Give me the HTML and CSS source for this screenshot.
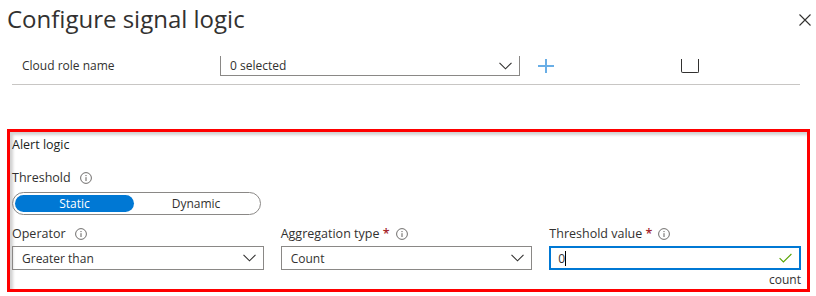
FILE: index.html
```html
<!DOCTYPE html>
<html>
<head>
<meta charset="utf-8">
<link rel="stylesheet" href="styles.css">
</head>
<body>
<div class="panel">
  <header class="header">
    <h1 class="title">Configure signal logic</h1>
    <button class="close" aria-label="Close">
      <svg width="12" height="12" viewBox="0 0 12 12"><path d="M0.5 0.5L11.5 11.5M11.5 0.5L0.5 11.5" stroke="#323130" stroke-width="1.1" fill="none"/></svg>
    </button>
  </header>

  <div class="dim-row">
    <div class="dim-label">Cloud role name</div>
    <div class="dim-select">
      <span>0 selected</span>
      <svg class="chev" width="13" height="8" viewBox="0 0 13 8"><path d="M0.5 0.8L6.5 6.8L12.5 0.8" stroke="#323130" stroke-width="1.1" fill="none"/></svg>
    </div>
    <div class="dim-add">
      <svg width="16" height="14" viewBox="0 0 16 14"><path d="M8 0V14M0 7H16" stroke="#69aee6" stroke-width="2" fill="none"/></svg>
    </div>
    <div class="dim-check"></div>
  </div>
  <div class="separator"></div>

  <section class="alert-box">
    <div class="section-title">Alert logic</div>
    <div class="label">Threshold <span class="info"><svg width="12" height="12" viewBox="0 0 12 12"><circle cx="6" cy="6" r="5.4" stroke="#605e5c" stroke-width="0.9" fill="none"/><path d="M6 5.2V9" stroke="#605e5c" stroke-width="1"/><circle cx="6" cy="3.6" r="0.7" fill="#605e5c"/></svg></span></div>
    <div class="toggle">
      <div class="toggle-opt active">Static</div>
      <div class="toggle-opt">Dynamic</div>
    </div>
    <div class="fields">
      <div class="field">
        <div class="label">Operator <span class="info"><svg width="12" height="12" viewBox="0 0 12 12"><circle cx="6" cy="6" r="5.4" stroke="#605e5c" stroke-width="0.9" fill="none"/><path d="M6 5.2V9" stroke="#605e5c" stroke-width="1"/><circle cx="6" cy="3.6" r="0.7" fill="#605e5c"/></svg></span></div>
        <div class="select">
          <span>Greater than</span>
          <svg class="chev" width="13" height="8" viewBox="0 0 13 8"><path d="M0.5 0.8L6.5 6.8L12.5 0.8" stroke="#323130" stroke-width="1.1" fill="none"/></svg>
        </div>
      </div>
      <div class="field">
        <div class="label">Aggregation type <span class="req">*</span> <span class="info"><svg width="12" height="12" viewBox="0 0 12 12"><circle cx="6" cy="6" r="5.4" stroke="#605e5c" stroke-width="0.9" fill="none"/><path d="M6 5.2V9" stroke="#605e5c" stroke-width="1"/><circle cx="6" cy="3.6" r="0.7" fill="#605e5c"/></svg></span></div>
        <div class="select">
          <span>Count</span>
          <svg class="chev" width="13" height="8" viewBox="0 0 13 8"><path d="M0.5 0.8L6.5 6.8L12.5 0.8" stroke="#323130" stroke-width="1.1" fill="none"/></svg>
        </div>
      </div>
      <div class="field">
        <div class="label">Threshold value <span class="req">*</span> <span class="info"><svg width="12" height="12" viewBox="0 0 12 12"><circle cx="6" cy="6" r="5.4" stroke="#605e5c" stroke-width="0.9" fill="none"/><path d="M6 5.2V9" stroke="#605e5c" stroke-width="1"/><circle cx="6" cy="3.6" r="0.7" fill="#605e5c"/></svg></span></div>
        <div class="input focused">
          <span class="val">0</span><span class="caret"></span>
          <svg class="ok" width="13" height="10" viewBox="0 0 13 10"><path d="M0.6 5.2L4.4 9L12.4 1" stroke="#57a300" stroke-width="1.1" fill="none"/></svg>
        </div>
        <div class="unit">count</div>
      </div>
    </div>
  </section>
</div>
</body>
</html>
```

FILE: styles.css
```css
* { box-sizing: border-box; }
html, body { margin: 0; padding: 0; background: #ffffff; }
body {
  font-family: "Open Sans", "Noto Sans", "Liberation Sans", sans-serif;
  color: #323130;
  width: 816px;
  height: 296px;
  overflow: hidden;
}
.panel { padding: 0; }

.header {
  display: flex;
  justify-content: space-between;
  align-items: flex-start;
  height: 44px;
  padding: 0 5px 0 7px;
}
.title {
  margin: 0;
  font-size: 24px;
  font-weight: 400;
  line-height: 38px;
  letter-spacing: 0;
  color: #323130;
}
.close {
  border: 0;
  background: transparent;
  padding: 0;
  margin-top: 14px;
  width: 12px;
  height: 12px;
  display: flex;
}

.dim-row {
  display: flex;
  align-items: center;
  height: 32px;
  margin-top: 6px;
}
.dim-label {
  width: 220px;
  padding-left: 22px;
  font-size: 12px;
  line-height: 20px;
}
.dim-select {
  width: 300px;
  height: 20px;
  border: 1px solid #8a8886;
  border-top: 0;
  display: flex;
  align-items: center;
  justify-content: space-between;
  padding: 0 7px 0 9px;
  font-size: 12px;
}
.dim-add {
  margin-left: 18px;
  width: 16px;
  height: 14px;
  display: flex;
}
.dim-check {
  margin-left: 127px;
  width: 18px;
  height: 14px;
  border: 1.5px solid #323130;
  border-top: 0;
  border-radius: 0 0 2px 2px;
}
.separator {
  margin: 2px 16px 0 12px;
  height: 1px;
  background: #c8c6c4;
}

.alert-box {
  margin: 44px 6px 0 7px;
  height: 163px;
  border: 3px solid #ff0000;
  box-shadow: inset 3px 3px 3px rgba(0, 0, 0, 0.18);
  padding: 3px 6px 0 2px;
}
.section-title {
  font-size: 12.5px;
  font-weight: 400;
  line-height: 20px;
  margin-bottom: 13px;
  color: #201f1e;
}
.label {
  font-size: 12.5px;
  line-height: 20px;
  display: flex;
  align-items: center;
  white-space: pre;
}
.label .info { display: inline-flex; margin-left: 6px; }
.req { color: #a4262c; font-weight: 600; }

.toggle {
  margin-top: 4px;
  width: 249px;
  height: 23px;
  border: 1px solid #8a8886;
  border-radius: 12px;
  padding: 2px;
  display: flex;
}
.toggle-opt {
  flex: 1 1 0;
  display: flex;
  align-items: center;
  justify-content: center;
  font-size: 12px;
  border-radius: 10px;
  color: #323130;
}
.toggle-opt.active {
  flex: 0 0 119px;
  background: #0078d4;
  color: #ffffff;
}

.fields {
  margin-top: 9px;
  display: grid;
  grid-template-columns: repeat(3, 1fr);
  column-gap: 17px;
}
.field { display: flex; flex-direction: column; }
.field .label { margin-bottom: 2px; }
.select, .input {
  height: 24px;
  border: 1px solid #8a8886;
  display: flex;
  align-items: center;
  justify-content: space-between;
  padding: 0 7px 0 9px;
  font-size: 12px;
}
.input.focused {
  border: 2px solid #0078d4;
  justify-content: flex-start;
  padding: 0 7px 0 7px;
}
.input .caret {
  width: 1px;
  height: 15px;
  background: #000;
}
.input .ok { margin-left: auto; }
.unit {
  text-align: right;
  font-size: 12px;
  line-height: 16px;
  margin-top: 2px;
}
```
